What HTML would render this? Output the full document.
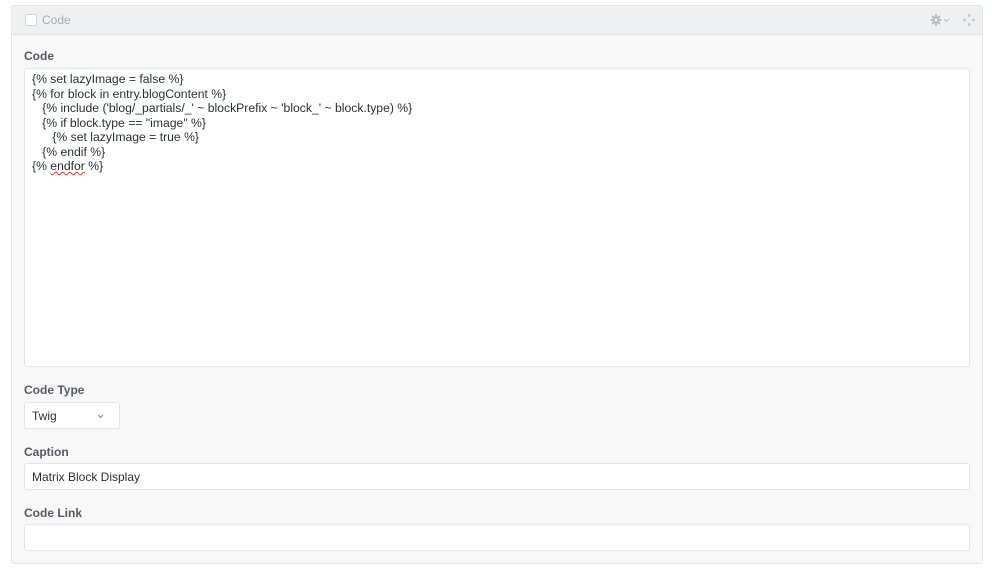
<!DOCTYPE html>
<html><head><style>
body{margin:0;width:992px;height:572px;background:#fff;font-family:"Liberation Sans",Arial,sans-serif;position:relative;overflow:hidden}
.panel{position:absolute;left:11px;top:5px;width:972px;height:559px;border:1px solid #e3e5e8;border-radius:3px;background:#f8f8f8;box-sizing:border-box}
.hdr{position:absolute;left:0;top:0;right:0;height:28px;background:#eef0f2;border-bottom:1px solid #e1e3e6}
.cb{position:absolute;left:13px;top:8px;width:10px;height:10px;border:1px solid #d4d6da;background:#fff;border-radius:2px}
.ht{position:absolute;left:30px;top:7px;font-size:12px;color:#a8adb3}
.lbl{position:absolute;left:12px;font-size:12px;font-weight:bold;color:#555b63}
.box{position:absolute;left:12px;width:946px;background:#fff;border:1px solid #e3e5e8;border-radius:3px;box-sizing:border-box}
pre{margin:0;font-family:"Liberation Sans",Arial,sans-serif;font-size:12.2px;line-height:14.5px;color:#2b2f33;position:absolute;left:7px;top:3px}
.sq{text-decoration:underline wavy #e33;text-decoration-thickness:1px}
.t{position:absolute;left:7px;top:6px;font-size:12px;color:#2b2f33}
</style></head><body>
<div class="panel">
 <div class="hdr"><div class="cb"></div><div class="ht">Code</div>
  <svg style="position:absolute;left:918px;top:8px" width="22" height="12" viewBox="0 0 22 12"><g fill="#b9bcc0"><circle cx="6" cy="6" r="3.6"/><rect x="5" y="0.5" width="2" height="11"/><rect x="0.5" y="5" width="11" height="2"/><rect x="5" y="0.5" width="2" height="11" transform="rotate(45 6 6)"/><rect x="5" y="0.5" width="2" height="11" transform="rotate(-45 6 6)"/></g><circle cx="6" cy="6" r="1.5" fill="#eef0f2"/><path d="M14 5l2.5 2.5L19 5" stroke="#b9bcc0" fill="none"/></svg>
  <svg style="position:absolute;left:951px;top:8px" width="12" height="12" viewBox="0 0 12 12"><g fill="#c4c7cb"><circle cx="6" cy="1.5" r="1.4"/><circle cx="6" cy="10.5" r="1.4"/><circle cx="1.5" cy="6" r="1.4"/><circle cx="10.5" cy="6" r="1.4"/></g></svg>
 </div>
 <div class="lbl" style="top:43px">Code</div>
 <div class="box" style="top:62px;height:299px"><pre>{% set lazyImage = false %}
{% for block in entry.blogContent %}
   {% include ('blog/_partials/_' ~ blockPrefix ~ 'block_' ~ block.type) %}
   {% if block.type == "image" %}
      {% set lazyImage = true %}
   {% endif %}
{% <span class="sq">endfor</span> %}</pre></div>
 <div class="lbl" style="top:377px">Code Type</div>
 <div class="box" style="top:396px;width:96px;height:27px;box-shadow:0 1px 1px rgba(0,0,0,.04)"><div class="t" style="top:6px">Twig</div><svg style="position:absolute;left:72px;top:11px" width="7" height="5"><path d="M1 1l2.5 2.5L6 1" stroke="#888" fill="none"/></svg></div>
 <div class="lbl" style="top:439px">Caption</div>
 <div class="box" style="top:457px;height:27px"><div class="t">Matrix Block Display</div></div>
 <div class="lbl" style="top:500px">Code Link</div>
 <div class="box" style="top:518px;height:27px"></div>
</div>
</body></html>
